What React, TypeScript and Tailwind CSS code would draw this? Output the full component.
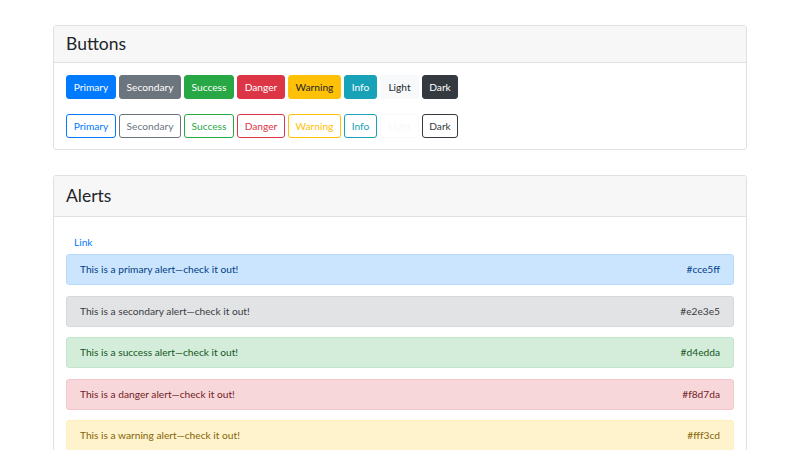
const solid = [
  { label: 'Primary', w: 'w-[50px]', cls: 'bg-[#007bff] border-[#007bff] text-white' },
  { label: 'Secondary', w: 'w-[62px]', cls: 'bg-[#6c757d] border-[#6c757d] text-white' },
  { label: 'Success', w: 'w-[50px]', cls: 'bg-[#28a745] border-[#28a745] text-white' },
  { label: 'Danger', w: 'w-[48px]', cls: 'bg-[#dc3545] border-[#dc3545] text-white' },
  { label: 'Warning', w: 'w-[53px]', cls: 'bg-[#ffc107] border-[#ffc107] text-[#212529]' },
  { label: 'Info', w: 'w-[33px]', cls: 'bg-[#17a2b8] border-[#17a2b8] text-white' },
  { label: 'Light', w: 'w-[39px]', cls: 'bg-[#f8f9fa] border-[#f8f9fa] text-[#212529]' },
  { label: 'Dark', w: 'w-[36px]', cls: 'bg-[#343a40] border-[#343a40] text-white' },
]

const outline = [
  { label: 'Primary', w: 'w-[50px]', cls: 'border-[#007bff] text-[#007bff]' },
  { label: 'Secondary', w: 'w-[62px]', cls: 'border-[#6c757d] text-[#6c757d]' },
  { label: 'Success', w: 'w-[50px]', cls: 'border-[#28a745] text-[#28a745]' },
  { label: 'Danger', w: 'w-[48px]', cls: 'border-[#dc3545] text-[#dc3545]' },
  { label: 'Warning', w: 'w-[53px]', cls: 'border-[#ffc107] text-[#ffc107]' },
  { label: 'Info', w: 'w-[33px]', cls: 'border-[#17a2b8] text-[#17a2b8]' },
  { label: 'Light', w: 'w-[39px]', cls: 'border-[#f8f9fa] text-[#f8f9fa]' },
  { label: 'Dark', w: 'w-[36px]', cls: 'border-[#343a40] text-[#343a40]' },
]

const alerts = [
  { name: 'primary', hex: '#cce5ff', cls: 'bg-[#cce5ff] border-[#b8daff] text-[#004085]' },
  { name: 'secondary', hex: '#e2e3e5', cls: 'bg-[#e2e3e5] border-[#d6d8db] text-[#383d41]' },
  { name: 'success', hex: '#d4edda', cls: 'bg-[#d4edda] border-[#c3e6cb] text-[#155724]' },
  { name: 'danger', hex: '#f8d7da', cls: 'bg-[#f8d7da] border-[#f5c6cb] text-[#721c24]' },
  { name: 'warning', hex: '#fff3cd', cls: 'bg-[#fff3cd] border-[#ffeeba] text-[#856404]' },
]

function Card({ title, headerH, children }: { title: string; headerH: string; children: React.ReactNode }) {
  return (
    <section className="rounded-[3px] border border-[#e0e0e0] bg-white">
      <div className={`flex items-center border-b border-[#e0e0e0] bg-[#f7f7f7] px-[12px] ${headerH}`}>
        <h2 className="text-[17.5px] leading-none text-[#212529]">{title}</h2>
      </div>
      {children}
    </section>
  )
}

export default function App() {
  return (
    <div className="min-h-[450px] bg-white font-['Lato',sans-serif] text-[#212529]">
      <div className="mx-auto flex w-[694px] flex-col gap-[25px] pt-[25px]">
        <Card title="Buttons" headerH="h-[37px]">
          <div className="flex flex-col gap-[15px] px-[12px] pt-[12px] pb-[11px]">
            <div className="flex gap-[3px]">
              {solid.map((b) => (
                <button
                  key={b.label}
                  className={`h-[24px] rounded-[3px] border text-center text-[10.2px] leading-none ${b.w} ${b.cls}`}
                >
                  {b.label}
                </button>
              ))}
            </div>
            <div className="flex gap-[3px]">
              {outline.map((b) => (
                <button
                  key={b.label}
                  className={`h-[24px] rounded-[3px] border bg-white text-center text-[10.2px] leading-none ${b.w} ${b.cls}`}
                >
                  {b.label}
                </button>
              ))}
            </div>
          </div>
        </Card>

        <Card title="Alerts" headerH="h-[41px]">
          <div className="px-[12px] pt-[20px]">
            <a href="#" className="ml-[8px] block text-[10.2px] leading-none text-[#007bff]">
              Link
            </a>
            <div className="mt-[7px] flex flex-col gap-[10.5px]">
              {alerts.map((a) => (
                <div
                  key={a.name}
                  className={`flex h-[31px] items-center justify-between rounded-[3px] border px-[13px] text-[10.2px] ${a.cls}`}
                >
                  <span>This is a {a.name} alert—check it out!</span>
                  <span>{a.hex}</span>
                </div>
              ))}
            </div>
          </div>
        </Card>
      </div>
    </div>
  )
}
